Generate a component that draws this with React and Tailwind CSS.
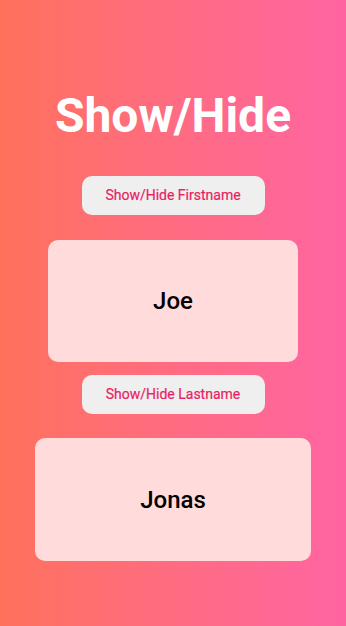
export default function App() {
  return (
    <div className="min-h-[626px] w-full bg-gradient-to-r from-[#ff715b] to-[#ff64a2] flex flex-col items-center pt-[84px] font-['Roboto',sans-serif]">
      <h1 className="text-white font-bold text-[48px] leading-[64px]">Show/Hide</h1>
      <button className="mt-[28px] w-[183px] h-[39px] rounded-[10px] bg-[#efefef] text-[#e91e63] text-[14px] [-webkit-text-stroke:0.2px_#e91e63]">
        Show/Hide Firstname
      </button>
      <div className="mt-[25px] w-[250px] h-[122px] rounded-[10px] bg-[#ffdbdb] flex items-center justify-center">
        <span className="text-black font-medium text-[24px]">Joe</span>
      </div>
      <button className="mt-[13px] w-[183px] h-[39px] rounded-[10px] bg-[#efefef] text-[#e91e63] text-[14px] [-webkit-text-stroke:0.2px_#e91e63]">
        Show/Hide Lastname
      </button>
      <div className="mt-[24px] w-[276px] h-[123px] rounded-[10px] bg-[#ffdbdb] flex items-center justify-center">
        <span className="text-black font-medium text-[24px]">Jonas</span>
      </div>
    </div>
  );
}
